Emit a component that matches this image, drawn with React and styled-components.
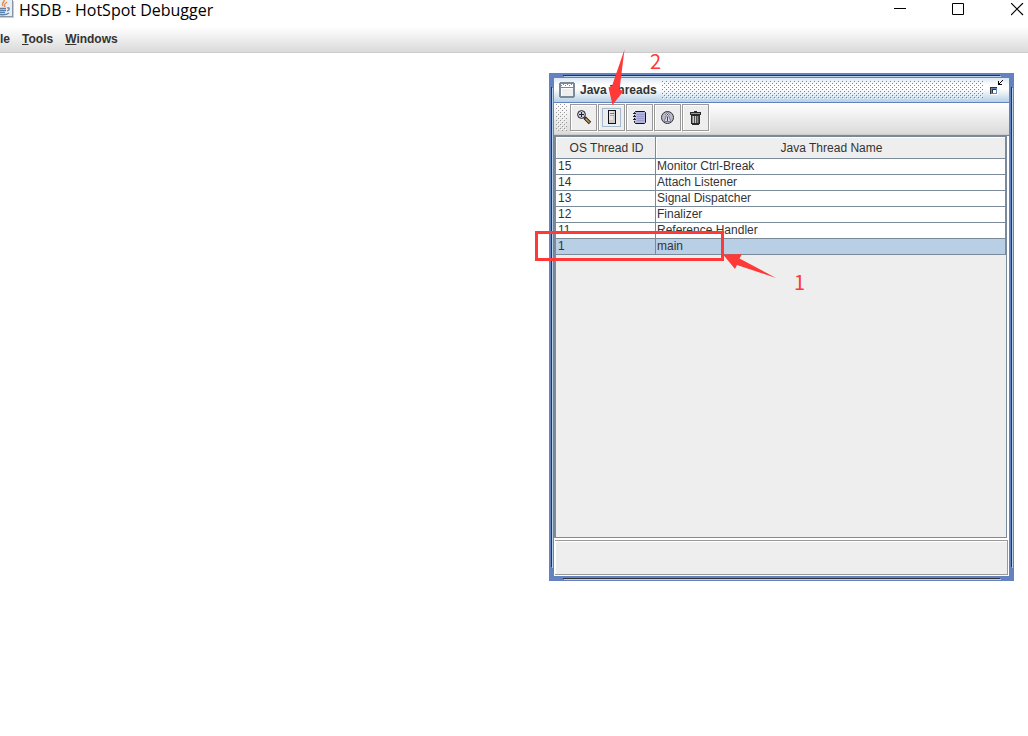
import React, { useState } from "react";
import styled, { createGlobalStyle, css } from "styled-components";

const threads = [
  { id: 15, name: "Monitor Ctrl-Break" },
  { id: 14, name: "Attach Listener" },
  { id: 13, name: "Signal Dispatcher" },
  { id: 12, name: "Finalizer" },
  { id: 11, name: "Reference Handler" },
  { id: 1, name: "main" },
];

const App = () => {
  const [selected, setSelected] = useState(1);

  return (
    <Window>
      <GlobalStyle />
      <TitleBar>
        <JavaIcon />
        <WindowTitle>HSDB - HotSpot Debugger</WindowTitle>
        <WindowControls />
      </TitleBar>
      <MenuBar>
        <MenuButton>le</MenuButton>
        <MenuButton>
          <u>T</u>ools
        </MenuButton>
        <MenuButton>
          <u>W</u>indows
        </MenuButton>
      </MenuBar>
      <Desktop>
        <Frame>
          <FrameTitle>
            <FrameIcon />
            <FrameName>Java Threads</FrameName>
            <TitleBumps>
              <Bumps id="title-bumps" color="#6382bf" />
            </TitleBumps>
            <RestoreButton aria-label="Restore">
              <RestoreIcon />
            </RestoreButton>
          </FrameTitle>
          <Toolbar>
            <ToolbarGrip>
              <Bumps id="grip-bumps" color="#999" />
            </ToolbarGrip>
            <ToolButton aria-label="Inspect Thread">
              <InspectIcon />
            </ToolButton>
            <ToolButton aria-label="Stack Memory" $hot>
              <StackIcon />
            </ToolButton>
            <ToolButton aria-label="Show Stack Trace">
              <TraceIcon />
            </ToolButton>
            <ToolButton aria-label="Thread Information">
              <InfoIcon />
            </ToolButton>
            <ToolButton aria-label="Find Crashes">
              <TrashIcon />
            </ToolButton>
          </Toolbar>
          <ScrollPane>
            <ThreadTable>
              <thead>
                <tr>
                  <HeadCell $narrow>OS Thread ID</HeadCell>
                  <HeadCell>Java Thread Name</HeadCell>
                </tr>
              </thead>
              <tbody>
                {threads.map(({ id, name }) => (
                  <ThreadRow
                    key={id}
                    $selected={id === selected}
                    onClick={() => setSelected(id)}
                  >
                    <Cell>{id}</Cell>
                    <Cell>{name}</Cell>
                  </ThreadRow>
                ))}
              </tbody>
            </ThreadTable>
          </ScrollPane>
          <StatusPanel />
        </Frame>
      </Desktop>
      <Highlight />
      <Arrows />
      <Step $left={794} $top={267}>
        1
      </Step>
      <Step $left={650} $top={46}>
        2
      </Step>
    </Window>
  );
};

const JavaIcon = () => (
  <svg width="14" height="18" viewBox="0 0 14 18">
    <path d="M0 0h13v17H0z" fill="#e9eef3" />
    <path d="M12 0h1v17H0v-1h12z" fill="#8797a8" />
    <path d="M13 1h1v17H0v-1h13z" fill="#c9ced4" />
    <path
      d="M4 0c1 2-3 3-1 6M7 2C4 4 4 5 5 7"
      fill="none"
      stroke="#e58a4a"
      strokeWidth="1.4"
    />
    <path
      d="M0 8.5h6M0 10.5h6M0 12.5h5M7 8c3-1 3 2 0 3M0 14.5c4 .6 7 0 9-1.5"
      fill="none"
      stroke="#5d83ab"
      strokeWidth="1.3"
    />
  </svg>
);

const WindowControls = () => (
  <Controls>
    <ControlButton aria-label="Minimize">
      <svg width="13" height="13" viewBox="0 0 13 13">
        <path d="M1 5.5h12" stroke="#000" />
      </svg>
    </ControlButton>
    <ControlButton aria-label="Maximize">
      <svg width="13" height="13" viewBox="0 0 13 13">
        <path d="M.5.5h11v11H.5z" fill="none" stroke="#000" />
      </svg>
    </ControlButton>
    <ControlButton aria-label="Close">
      <svg width="13" height="13" viewBox="0 0 13 13">
        <path d="M0 0l12 12M12 0L0 12" stroke="#000" strokeWidth="1.2" />
      </svg>
    </ControlButton>
  </Controls>
);

const Bumps = ({ id, color }) => (
  <svg width="100%" height="100%" shapeRendering="crispEdges">
    <pattern id={id} width="4" height="4" patternUnits="userSpaceOnUse">
      <path d="M1 1h1v1H1zM3 3h1v1H3z" fill="#fff" />
      <path d="M0 0h1v1H0zM2 2h1v1H2z" fill={color} />
    </pattern>
    <rect width="100%" height="100%" fill={`url(#${id})`} />
  </svg>
);

const FrameIcon = () => (
  <svg width="16" height="16" viewBox="0 0 16 16" shapeRendering="crispEdges">
    <path d="M1 0h14v1h1v14h-1v1H1v-1H0V1h1z" fill="#7a8a99" />
    <path d="M2 2h12v3H2zM2 6h12v8H2z" fill="#fff" />
    <path d="M2 5h12v1H2z" fill="#7a8a99" />
    <path
      d="M2 3h1v1H2zM4 2h1v1H4zM6 3h1v1H6zM8 2h1v1H8zM10 3h1v1h-1zM12 2h1v1h-1z"
      fill="#6382bf"
    />
    <path d="M3 7h11v7H3z" fill="#eee" />
  </svg>
);

const RestoreIcon = () => (
  <svg width="16" height="20" viewBox="0 0 16 20" shapeRendering="crispEdges">
    <path d="M3 8h7v7H3z" fill="#fff" />
    <path d="M2 7h7v7H2z" fill="#333" />
    <path d="M3 8h6v6H3z" fill="#6382bf" />
    <path d="M4 9h4v4H4z" fill="#333" />
    <path d="M5 10h3v3H5z" fill="#fff" />
    <path
      d="M10 1h1v4h-1zM11 4h3v1h-3zM11 3h1v1h-1zM12 2h1v1h-1zM13 1h1v1h-1zM14 0h1v1h-1z"
      fill="#000"
    />
  </svg>
);

const InspectIcon = () => (
  <svg width="16" height="16" viewBox="0 0 16 16">
    <path d="M8.5 8.5L14 14" stroke="#222" strokeWidth="3.4" />
    <path d="M9.5 9.5l4 4" stroke="#d99445" strokeWidth="1.6" />
    <circle cx="5.5" cy="5.5" r="3.9" fill="#ccd" stroke="#222" />
    <path d="M5.5 3v5M3 5.5h5" stroke="#223" />
  </svg>
);

const StackIcon = () => (
  <svg width="16" height="16" viewBox="0 0 16 16" shapeRendering="crispEdges">
    <path d="M4 1h8v14H4z" fill="#111" />
    <path d="M5 2h6v12H5z" fill="#e6e6e6" />
    <path d="M9 2h2v12H9zM5 11h6v3H5z" fill="#ccc" />
    <path d="M6 4h4v1H6z" fill="#777" />
    <path d="M6 6h4v1H6z" fill="#aaa" />
  </svg>
);

const TraceIcon = () => (
  <svg width="16" height="16" viewBox="0 0 16 16">
    <path d="M3.5 2.5h9l1 1v10l-1 1h-9l-1-1v-10z" fill="#b3b3dc" stroke="#111" />
    <path d="M5 5.5h7M5 7.5h7M5 9.5h7M5 11.5h7" stroke="#9c9ccc" />
    <path d="M1 4.5h3M1 7.5h3M1 10.5h3" stroke="#222" />
    <path d="M2 5.5h2M2 8.5h2M2 11.5h2" stroke="#ccd" />
  </svg>
);

const InfoIcon = () => (
  <svg width="16" height="16" viewBox="0 0 16 16">
    <circle cx="7.5" cy="8.5" r="6" fill="#b8b8cc" stroke="#333" />
    <path
      d="M7.5 3.5l-2 2 1 1-2 5v1h6v-1l-2-5 1-1z"
      fill="#dcdcea"
      stroke="#666677"
      strokeWidth=".8"
    />
    <path d="M7.5 5v1M7.5 7.5V12" stroke="#444" />
  </svg>
);

const TrashIcon = () => (
  <svg width="16" height="16" viewBox="0 0 16 16" shapeRendering="crispEdges">
    <path d="M6 2h3v1h4v3h-1v9h-1v1H4v-1H3V6H2V3h4z" fill="#2a2a2a" />
    <path d="M3 4h9v1H3z" fill="#999" />
    <path d="M4 7h7v7H4z" fill="#888" />
    <path d="M5 7h1v7H5zM7 7h1v7H7z" fill="#ccc" />
    <path d="M6 7h1v7H6zM8 7h1v7H8zM10 7h1v7h-1z" fill="#555" />
  </svg>
);

const Arrows = () => (
  <ArrowLayer width="240" height="240" viewBox="540 45 240 240">
    <path d="M624.5 49.5L612 86l-3.5 1.500L612.5 105l11-14-4-1.5z" />
    <path d="M723 254.5l19-.5-2.5 4.5L776 278l-39-13-2 4z" />
  </ArrowLayer>
);

const GlobalStyle = createGlobalStyle`
  * {
    box-sizing: border-box;
  }

  body {
    margin: 0;
    background: #fff;
    color: #333;
    font: 12px/16px "Liberation Sans", Arial, sans-serif;
  }

  button {
    padding: 0;
    border: 0;
    background: none;
    color: inherit;
    font: inherit;
  }

  svg {
    display: block;
    flex: none;
  }
`;

const Window = styled.div`
  position: relative;
  display: flex;
  flex-direction: column;
  min-height: 100vh;
  overflow: hidden;
`;

const TitleBar = styled.header`
  display: flex;
  align-items: flex-start;
  height: 27px;
  padding-right: 4px;
`;

const WindowTitle = styled.h1`
  flex: 1;
  margin: 0 0 0 5px;
  color: #000;
  font: 16px/20px "Open Sans", "Noto Sans", sans-serif;
`;

const Controls = styled.div`
  display: flex;
  gap: 46px;
  padding-top: 3px;
`;

const ControlButton = styled.button`
  width: 13px;
  height: 13px;
`;

const MenuBar = styled.nav`
  display: flex;
  align-items: center;
  gap: 12px;
  height: 26px;
  padding-bottom: 2px;
  background: linear-gradient(#fff, #dadada);
  border-bottom: 1px solid #ccc;
`;

const MenuButton = styled.button`
  font-weight: bold;
`;

const Desktop = styled.main`
  position: relative;
  flex: 1;
`;

const line = (color) => `linear-gradient(${color}, ${color})`;

const Frame = styled.section`
  position: absolute;
  top: 20px;
  left: 549px;
  display: flex;
  flex-direction: column;
  width: 465px;
  height: 508px;
  padding: 5px;
  background: ${line("#333")} 14px 2px / calc(100% - 28px) 1px,
    ${line("#b8cfe5")} 15px 3px / calc(100% - 28px) 1px,
    ${line("#333")} 14px calc(100% - 2px) / calc(100% - 28px) 1px,
    ${line("#b8cfe5")} 15px calc(100% - 1px) / calc(100% - 28px) 1px,
    ${line("#333")} 2px 14px / 1px calc(100% - 28px),
    ${line("#b8cfe5")} 3px 15px / 1px calc(100% - 28px),
    ${line("#333")} calc(100% - 2px) 14px / 1px calc(100% - 28px),
    ${line("#b8cfe5")} calc(100% - 1px) 15px / 1px calc(100% - 28px),
    #6382bf;
  background-repeat: no-repeat;
`;

const FrameTitle = styled.header`
  display: flex;
  align-items: center;
  gap: 5px;
  height: 25px;
  padding: 0 5px;
  background: linear-gradient(#dde8f3, #fff 30%, #fff 45%, #b8cfe5);
  border-bottom: 1px solid #6382bf;
`;

const FrameName = styled.h2`
  margin: 0;
  font-size: 12px;
  line-height: 16px;
`;

const TitleBumps = styled.div`
  flex: 1;
  height: 18px;
`;

const RestoreButton = styled.button`
  width: 16px;
  height: 20px;
`;

const Toolbar = styled.div`
  display: flex;
  align-items: center;
  gap: 1px;
  height: 32px;
  padding: 0 2px 2px;
  background: linear-gradient(#fff, #dadada);
  border-bottom: 1px solid #ccc;
`;

const ToolbarGrip = styled.div`
  width: 11px;
  height: 27px;
  margin-right: 2px;
`;

const ToolButton = styled.button`
  width: 27px;
  height: 27px;
  padding: 4px 4px 5px 5px;
  background: #eee;
  border: 1px solid #999;
  box-shadow: 1px 1px #fff, inset 1px 1px #fff;

  ${({ $hot }) =>
    $hot &&
    css`
      outline: 1px solid #a3b8cc;
      outline-offset: -5px;
    `}
`;

const ScrollPane = styled.div`
  flex: 1;
  margin-right: 2px;
  overflow: hidden;
  background: #eee;
  border: solid #7a8a99;
  border-width: 2px 1px 1px 2px;
  box-shadow: 1px 1px #fff, 2px 1px #fff;
`;

const ThreadTable = styled.table`
  width: 100%;
  table-layout: fixed;
  border-spacing: 0;
`;

const HeadCell = styled.th`
  width: ${({ $narrow }) => ($narrow ? "100px" : "auto")};
  height: 22px;
  padding: 0 0 0 2px;
  background: #eee;
  border-right: 1px solid #7a8a99;
  border-bottom: 1px solid #7a8a99;
  box-shadow: inset 1px 1px #fff;
  font-weight: normal;
`;

const ThreadRow = styled.tr`
  background: ${({ $selected }) => ($selected ? "#b8cfe5" : "#fff")};
`;

const Cell = styled.td`
  height: 16px;
  padding: 0 1px;
  border-right: 1px solid #7a8a99;
  border-bottom: 1px solid #7a8a99;
  line-height: 15px;

  &:first-child {
    padding-left: 2px;
  }
`;

const StatusPanel = styled.footer`
  height: 38px;
  background: #eee;
  border: solid #fff;
  border-width: 2px 1px 1px;
  box-shadow: inset 0 1px #999, inset -1px -1px #999, inset 1px 2px #fff;
`;

const Highlight = styled.div`
  position: absolute;
  top: 231px;
  left: 535px;
  width: 189px;
  height: 30px;
  border: 3px solid #ff3838;
  pointer-events: none;
`;

const ArrowLayer = styled.svg`
  position: absolute;
  top: 45px;
  left: 540px;
  fill: #ff3838;
  pointer-events: none;
`;

const Step = styled.span`
  position: absolute;
  top: ${({ $top }) => $top}px;
  left: ${({ $left }) => $left}px;
  color: #ff3838;
  font: 20px/30px "Noto Sans CJK SC", sans-serif;
`;

export default App;
